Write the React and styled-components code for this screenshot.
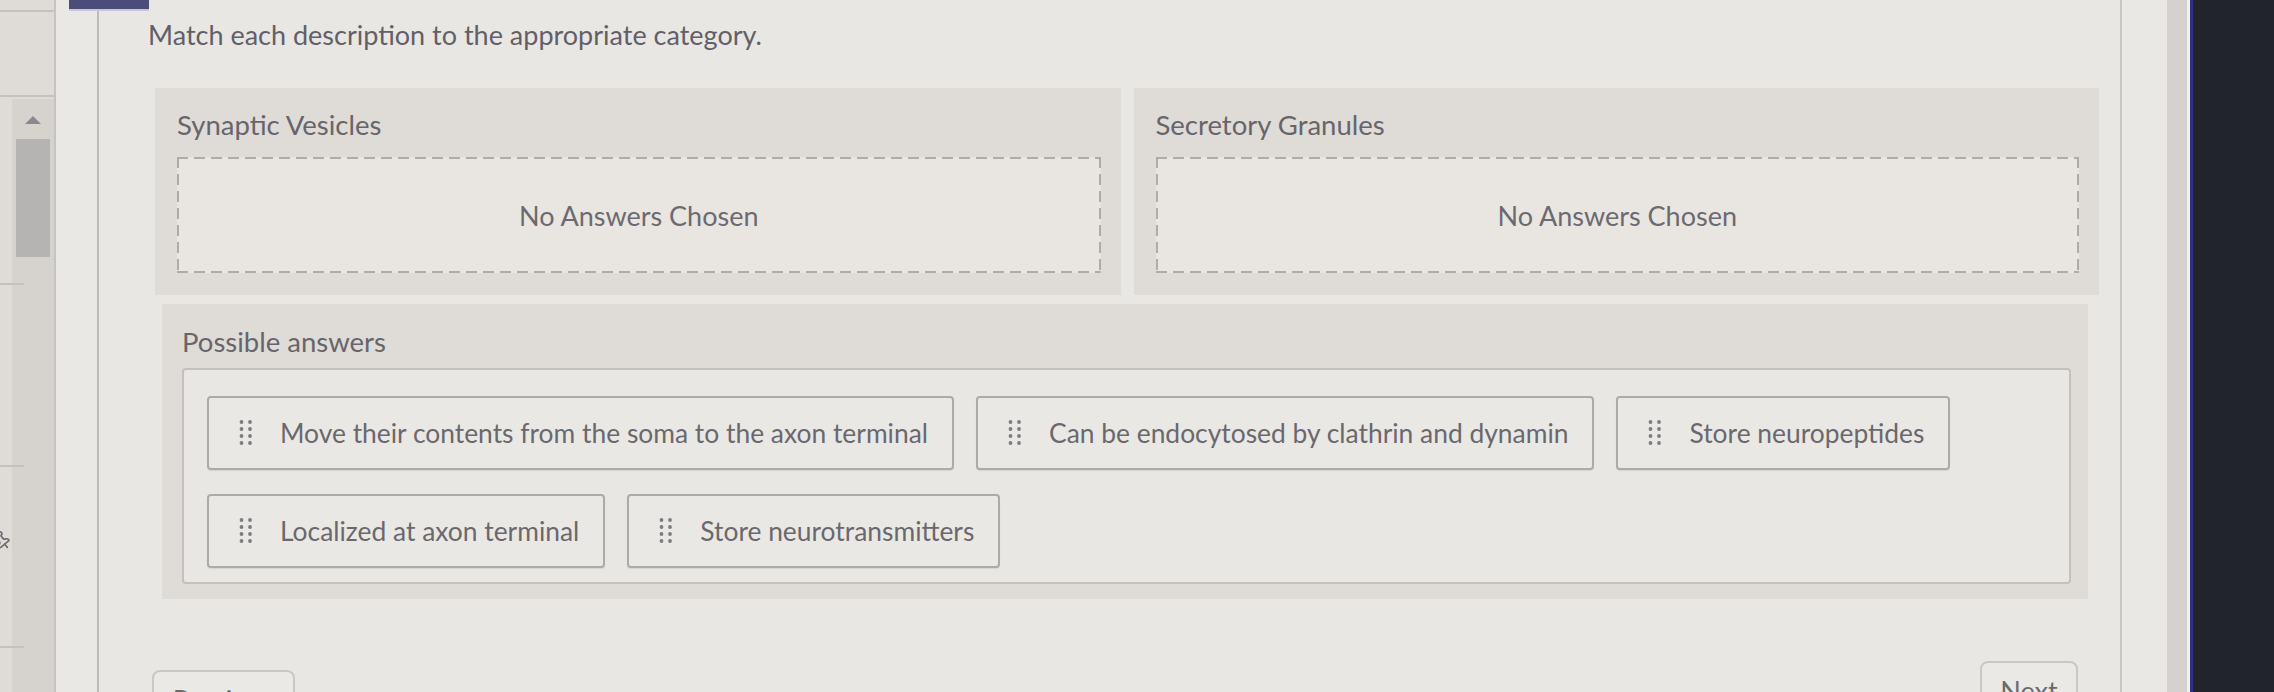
import React from "react";
import styled, { createGlobalStyle } from "styled-components";
import { Pin } from "lucide-react";

const GlobalStyle = createGlobalStyle`
  html, body {
    margin: 0;
    padding: 0;
    background: #e9e7e3;
  }
  body {
    font-family: Lato, "Open Sans", "Liberation Sans", sans-serif;
    color: #68666c;
  }
`;

const categories = ["Synaptic Vesicles", "Secretory Granules"];

const answers = [
  "Move their contents from the soma to the axon terminal",
  "Can be endocytosed by clathrin and dynamin",
  "Store neuropeptides",
  "Localized at axon terminal",
  "Store neurotransmitters",
];

const sideItems = [12, 85, 188, 182, 181];

const DragHandle = () => (
  <svg width="14" height="26" viewBox="0 0 14 26">
    {[2, 9, 16, 23].map((y) =>
      [2.5, 11].map((x) => <circle key={`${x}-${y}`} cx={x} cy={y} r="1.9" fill="#7d7b81" />)
    )}
  </svg>
);

const App = () => {
  return (
    <Screen>
      <GlobalStyle />
      <NavTab />

      <Sidebar>
        <ListColumn>
          {sideItems.map((h, i) => (
            <ListItem key={i} $h={h}>
              {i === 4 && (
                <PinIcon>
                  <Pin size={20} strokeWidth={2} />
                </PinIcon>
              )}
            </ListItem>
          ))}
        </ListColumn>
        <ScrollColumn>
          <Track>
            <ArrowUp />
            <Thumb />
          </Track>
        </ScrollColumn>
      </Sidebar>

      <Gutter />

      <Main>
        <Title>Match each description to the appropriate category.</Title>

        <CategoryGrid>
          {categories.map((c) => (
            <CategoryPanel key={c}>
              <Label>{c}</Label>
              <DropZone>No Answers Chosen</DropZone>
            </CategoryPanel>
          ))}
        </CategoryGrid>

        <AnswersPanel>
          <Label>Possible answers</Label>
          <AnswerBox>
            {answers.map((a) => (
              <Chip key={a}>
                <DragHandle />
                <span>{a}</span>
              </Chip>
            ))}
          </AnswerBox>
        </AnswersPanel>

        <Footer>
          <NavButton $w={143} $drop={9}>Previous</NavButton>
          <NavButton $w={98}>Next</NavButton>
        </Footer>
      </Main>

      <RightGap />
      <RightBand />
      <Bezel />
    </Screen>
  );
};

export default App;

const Screen = styled.div`
  position: relative;
  display: flex;
  width: 2274px;
  height: 692px;
  overflow: hidden;
  background: #e9e7e3;
`;

const NavTab = styled.div`
  position: absolute;
  top: 0;
  left: 69px;
  width: 80px;
  height: 9px;
  background: #4b4d78;
  border-bottom: 2px solid #c9c3dc;
`;

const Sidebar = styled.aside`
  flex-shrink: 0;
  width: 54px;
  display: flex;
  background: #dfdcd8;
  border-right: 2px solid #c6c3c0;
`;

const ListColumn = styled.div`
  width: 12px;
  display: flex;
  flex-direction: column;
`;

const ListItem = styled.div`
  position: relative;
  height: ${(p) => p.$h}px;
  flex-shrink: 0;
  border-bottom: 2px solid #c4c1be;
  box-sizing: border-box;
  &:nth-child(-n + 2) {
    margin-right: -42px;
  }
  &:nth-child(n + 3) {
    margin-right: -12px;
  }
`;

const PinIcon = styled.div`
  position: absolute;
  left: -8px;
  top: 64px;
  color: #6f6c72;
  transform: rotate(-40deg);
  display: flex;
`;

const ScrollColumn = styled.div`
  flex: 1;
  padding-top: 99px;
  display: flex;
`;

const Track = styled.div`
  flex: 1;
  background: #d6d3cf;
  display: flex;
  flex-direction: column;
  align-items: center;
`;

const ArrowUp = styled.div`
  margin-top: 17px;
  width: 0;
  height: 0;
  border-left: 8px solid transparent;
  border-right: 8px solid transparent;
  border-bottom: 8px solid #8b8891;
`;

const Thumb = styled.div`
  margin-top: 15px;
  width: 34px;
  height: 118px;
  background: #b6b3b3;
`;

const Gutter = styled.div`
  flex-shrink: 0;
  width: 41px;
  background: #eae8e4;
  border-right: 2px solid #bebbb9;
`;

const Main = styled.main`
  flex-shrink: 0;
  width: 2021px;
  box-sizing: border-box;
  padding: 19px 0 0 49px;
  display: flex;
  flex-direction: column;
`;

const Title = styled.h1`
  margin: 0;
  font-size: 27px;
  font-weight: 400;
  line-height: 32px;
  color: #625f68;
`;

const CategoryGrid = styled.div`
  display: grid;
  grid-template-columns: 1fr 1fr;
  gap: 13px;
  margin: 37px 21px 0 7px;
`;

const CategoryPanel = styled.section`
  background: #dfdcd8;
  padding: 21px 20px 22px 22px;
  display: flex;
  flex-direction: column;
  gap: 16px;
`;

const Label = styled.div`
  font-size: 27.5px;
  line-height: 32px;
  color: #67656b;
`;

const DropZone = styled.div`
  height: 116px;
  display: flex;
  align-items: center;
  justify-content: center;
  font-size: 27px;
  color: #6c6a70;
  background:
    repeating-linear-gradient(90deg, #aeaba8 0 11px, transparent 11px 17px) top / 100% 2px no-repeat,
    repeating-linear-gradient(90deg, #aeaba8 0 11px, transparent 11px 17px) bottom / 100% 2px no-repeat,
    repeating-linear-gradient(180deg, #aeaba8 0 11px, transparent 11px 17px) left / 2px 100% no-repeat,
    repeating-linear-gradient(180deg, #aeaba8 0 11px, transparent 11px 17px) right / 2px 100% no-repeat,
    #e9e6e2;
`;

const AnswersPanel = styled.section`
  margin: 9px 32px 0 14px;
  background: #dfdcd8;
  padding: 22px 17px 15px 20px;
  display: flex;
  flex-direction: column;
  gap: 10px;
`;

const AnswerBox = styled.div`
  display: flex;
  flex-wrap: wrap;
  align-content: flex-start;
  column-gap: 22px;
  row-gap: 24px;
  padding: 26px 24px 14px 23px;
  background: #e9e7e3;
  border: 2px solid #c3c0bd;
  border-radius: 4px;
`;

const Chip = styled.div`
  display: flex;
  align-items: center;
  gap: 27px;
  height: 74px;
  box-sizing: border-box;
  padding: 0 24px 0 30px;
  background: #eae8e4;
  border: 2px solid #adaaa8;
  border-radius: 4px;
  box-shadow: 0 1px 1px rgba(0, 0, 0, 0.08);
  font-size: 26.4px;
  color: #6a686e;
  white-space: nowrap;
`;

const Footer = styled.div`
  display: flex;
  justify-content: space-between;
  align-items: flex-start;
  margin: 62px 42px 0 4px;
`;

const NavButton = styled.button`
  width: ${(p) => p.$w}px;
  height: 60px;
  margin-top: ${(p) => p.$drop || 0}px;
  padding: 12px 0 0;
  display: flex;
  justify-content: center;
  align-items: flex-start;
  font-family: inherit;
  font-size: 27px;
  line-height: 32px;
  color: #6b6970;
  background: #ebe9e5;
  border: 2px solid #cac7c4;
  border-radius: 8px;
`;

const RightGap = styled.div`
  flex-shrink: 0;
  width: 45px;
  background: #eae8e4;
  border-left: 2px solid #c8c5c2;
`;

const RightBand = styled.div`
  flex-shrink: 0;
  width: 20px;
  background: #d4d1ce;
  border-right: 3px solid #f1f0f3;
`;

const Bezel = styled.div`
  flex: 1;
  background: #22242b;
  border-left: 3px solid #2e3182;
`;
